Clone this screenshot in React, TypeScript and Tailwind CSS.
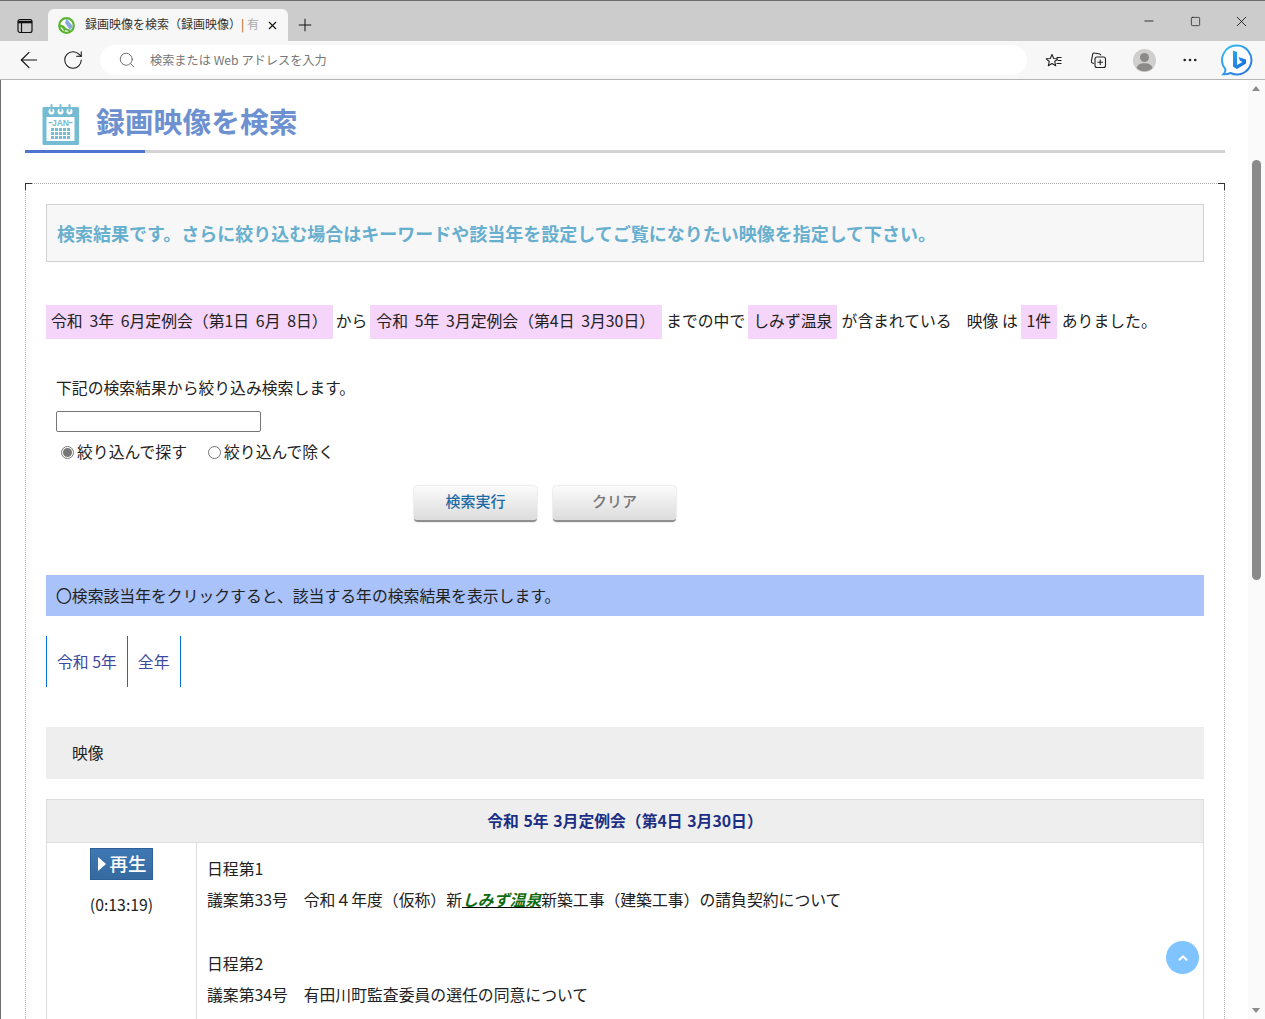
import React from 'react';
import { ArrowLeft, RotateCw, Search, Plus, X, Minus, Square, MoreHorizontal, ChevronUp } from 'lucide-react';

const Hl = ({ children, className = 'px-[5px]' }: { children: React.ReactNode; className?: string }) => (
  <span className={`inline-flex h-[34px] items-center bg-[#f5d5fa] [word-spacing:3.2px] ${className}`}>{children}</span>
);

const CalendarIcon = () => (
  <svg width="38" height="41" viewBox="0 0 38 41" className="shrink-0">
    <rect x="0.5" y="3" width="36.500" height="38" rx="1.500" fill="#74bbd4" />
    <rect x="4.500" y="13" width="28" height="24" fill="#fff" />
    {[9.500, 18.500, 27.500].map(x => (
      <g key={x}>
        <circle cx={x} cy="7.500" r="3" fill="#fff" />
        <rect x={x - 1} y="0" width="2" height="8" rx="1" fill="#74bbd4" />
      </g>
    ))}
    <rect x="6.500" y="18" width="4" height="1.200" fill="#74bbd4" />
    <rect x="26.500" y="18" width="4" height="1.200" fill="#74bbd4" />
    <text x="18.500" y="21.500" textAnchor="middle" fontSize="8.500" fontWeight="700" fill="#74bbd4" fontFamily="Liberation Sans">JAN</text>
    {[24, 28, 32].map(y =>
      [9, 13, 17, 21, 25].map(x => <rect key={`${x}-${y}`} x={x} y={y} width="3" height="3" fill="#74bbd4" />)
    )}
  </svg>
);

const Favicon = () => (
  <svg width="17" height="17" viewBox="0 0 17 17">
    <circle cx="8.500" cy="8.500" r="7.300" fill="#fff" stroke="#5cb531" strokeWidth="2.200" />
    <path d="M8.500 1.500L15 9.500l-3 3.500L7 6z" fill="#8aa9de" />
    <path d="M2 7.500c3 .5 5 1.500 6 4l-2 3.500c0-3-2-5-4.500-5z" fill="#5cb531" />
    <path d="M6.500 10.500l6 2.500-1 1.500-5.500-2z" fill="#5cb531" />
  </svg>
);

const SidebarIcon = () => (
  <svg width="16" height="16" viewBox="0 0 16 16" fill="none" stroke="#111" strokeWidth="1.200">
    <rect x="1" y="1.500" width="14" height="13" rx="2" />
    <path d="M1 4h14" strokeWidth="2.600" />
    <path d="M4.500 4v10.500" />
  </svg>
);

const BingIcon = () => (
  <svg width="32" height="32" viewBox="0 0 32 32">
    <defs>
      <linearGradient id="bingRing" x1="0" y1="0" x2="1" y2="1">
        <stop offset="0" stopColor="#35c1f1" />
        <stop offset="1" stopColor="#2f6fe0" />
      </linearGradient>
      <linearGradient id="bingB" x1="0" y1="0" x2="1" y2="1">
        <stop offset="0" stopColor="#2aa8e8" />
        <stop offset="1" stopColor="#1b63e0" />
      </linearGradient>
    </defs>
    <path d="M16 1.500a14.500 14.500 0 1 1-6.500 27.500c-2 1-4 1.400-7 1.300 1.200-1.200 2-3 2-5A14.500 14.500 0 0 1 16 1.500z" fill="#fff" stroke="url(#bingRing)" strokeWidth="2" />
    <path d="M12 6.500l4 1.400v13l5.500-3-2.500-1.200-1.500-3.800 7.500 2.600v4L16 25l-4-2.200z" fill="url(#bingB)" />
  </svg>
);

const FavoritesIcon = () => (
  <svg width="18" height="18" viewBox="0 0 18 18" fill="none" stroke="#222" strokeWidth="1.100" strokeLinejoin="round">
    <path d="M7 2l1.700 4 4 .3-3 2.700 1 4.300L7 11l-3.700 2.300 1-4.300-3-2.700 4-.3z" transform="translate(0 1.500)" />
    <path d="M11.500 6.500h5M12.500 9.500h4M11.500 12.500h5" />
  </svg>
);

const CollectionsIcon = () => (
  <svg width="18" height="18" viewBox="0 0 18 18" fill="none" stroke="#222" strokeWidth="1.100">
    <path d="M5 12.500L3.400 12a1.500 1.500 0 0 1-1-1.800L3.700 3.200A1.500 1.500 0 0 1 5.500 2l5.200 1a1.500 1.500 0 0 1 1.200 1.400" />
    <rect x="6" y="6" width="10.500" height="10.500" rx="2" fill="#f7f7f7" />
    <path d="M11.200 8.500v5.500M8.500 11.200h5.500" />
  </svg>
);

const ProfileIcon = () => (
  <svg width="23" height="23" viewBox="0 0 23 23">
    <circle cx="11.500" cy="11.500" r="11.500" fill="#d0cfcd" />
    <circle cx="11.500" cy="8.500" r="4.500" fill="#8c8a88" />
    <path d="M3.500 19c1-3.500 4-4.800 8-4.800s7 1.300 8 4.800a11.500 11.500 0 0 1-16 0z" fill="#8c8a88" />
  </svg>
);

export default function App() {
  return (
    <div className="flex h-[1019px] w-[1265px] flex-col overflow-hidden bg-white font-['Noto_Sans_CJK_JP','Noto_Sans',sans-serif] text-[15.84px] text-[#222]">
      {/* Tab strip */}
      <div className="flex h-[41px] shrink-0 items-end border-t border-[#6e6e6e] bg-[#cccccc]">
        <div className="flex h-[31px] w-[48px] items-center justify-center pl-[2px]">
          <SidebarIcon />
        </div>
        <div className="flex h-[32px] w-[240px] items-center rounded-t-[6px] bg-[#f7f7f7] pl-[10px] pr-[9px]">
          <Favicon />
          <span className="ml-[10px] w-[172px] whitespace-nowrap pb-[2px] text-[12px] text-[#333]">
            録画映像を検索（録画映像）<span className="text-[#a06000]">|</span> <span className="text-[#aaa]">有</span>
          </span>
          <X size={13} strokeWidth={2} className="ml-[9px] text-[#111]" />
        </div>
        <div className="flex h-[32px] w-[34px] items-center justify-center">
          <Plus size={20} strokeWidth={1.200} className="text-[#111]" />
        </div>
        <div className="flex-1" />
        <div className="mr-[1px] flex h-[40px] w-[138px] items-center self-start text-[#111]">
          <div className="flex w-[46px] justify-center"><Minus size={14} strokeWidth={1.400} /></div>
          <div className="flex w-[46px] justify-center"><Square size={11} strokeWidth={1.500} /></div>
          <div className="flex w-[46px] justify-center"><X size={17} strokeWidth={1.200} /></div>
        </div>
      </div>

      {/* Toolbar */}
      <div className="flex h-[39px] shrink-0 items-center border-b border-[#b5b5b5] bg-[#f7f7f7] pl-[16px]">
        <ArrowLeft size={26} strokeWidth={1.100} className="text-[#111]" />
        <RotateCw size={22} strokeWidth={1.100} className="ml-[20px] text-[#111]" />
        <div className="ml-[16px] flex h-[30px] w-[927px] items-center rounded-full bg-white pl-[18px]">
          <Search size={18} strokeWidth={1.100} className="text-[#555]" />
          <span className="ml-[14px] text-[12.200px] text-[#777]">検索または Web アドレスを入力</span>
        </div>
        <div className="ml-[18px] flex w-[18px] justify-center"><FavoritesIcon /></div>
        <div className="ml-[26px] flex w-[18px] justify-center"><CollectionsIcon /></div>
        <div className="ml-[26px] flex"><ProfileIcon /></div>
        <div className="ml-[25px] flex"><MoreHorizontal size={18} strokeWidth={1.600} className="text-[#222]" /></div>
        <div className="ml-[22px] flex"><BingIcon /></div>
      </div>

      {/* Page */}
      <div className="relative flex min-h-0 flex-1 border-l border-[#6e6e6e]">
        <main className="min-w-0 flex-1 overflow-hidden pl-[24px] pr-[23px]">
          <div className="relative flex h-[73px] items-end border-b-[3px] border-[#d3d3d3] pb-[5px] pl-[17px]">
            <CalendarIcon />
            <h1 className="ml-[16px] text-[28.800px] font-bold leading-[48px] text-[#6d90d0]">録画映像を検索</h1>
            <div className="absolute bottom-[-3px] left-0 h-[3px] w-[120px] bg-[#4f74d0]" />
          </div>

          <section className="relative mt-[30px] border border-b-0 border-dotted border-[#aaa] px-[20px] pt-[20px]">
            <span className="absolute left-[-1px] top-[-1px] h-[7px] w-[7px] border-l border-t border-[#333]" />
            <span className="absolute right-[-1px] top-[-1px] h-[7px] w-[7px] border-r border-t border-[#333]" />

            <div className="flex h-[58px] items-center border border-[#d0d0d0] bg-[#f7f7f7] pl-[10px] text-[18px] font-bold text-[#67afce]">
              検索結果です。さらに絞り込む場合はキーワードや該当年を設定してご覧になりたい映像を指定して下さい。
            </div>

            <div className="mt-[43px] flex h-[34px] items-center whitespace-pre [&>span]:pb-[2px]">
              <Hl>令和 3年 6月定例会（第1日 6月 8日）</Hl>
              <span className="mx-[3px]">から</span>
              <Hl className="pl-[6px] pr-[7px]">令和 5年 3月定例会（第4日 3月30日）</Hl>
              <span className="ml-[4px] mr-[3px]">までの中で</span>
              <Hl>しみず温泉</Hl>
              <span className="ml-[4px] mr-[15px]">が含まれている</span>
              <span className="mr-[3px]">映像 は</span>
              <Hl className="w-[36px] justify-center">1件</Hl>
              <span className="ml-[5px]">ありました。</span>
            </div>

            <div className="mt-[36px] pl-[10px]">
              <p className="leading-[26px]">下記の検索結果から絞り込み検索します。</p>
              <input type="text" className="mt-[10px] block h-[21px] w-[205px] rounded-[2px] border border-[#767676] bg-white" />
              <div className="mt-[8px] flex h-[24px] items-center pl-[5px]">
                <span className="flex h-[13px] w-[13px] items-center justify-center rounded-full border border-[#767676]">
                  <span className="h-[9px] w-[9px] rounded-full bg-[#767676]" />
                </span>
                <span className="ml-[3px]">絞り込んで探す</span>
                <span className="ml-[21px] h-[13px] w-[13px] rounded-full border border-[#767676]" />
                <span className="ml-[3px]">絞り込んで除く</span>
              </div>
              <div className="mt-[22px] flex pl-[358px]">
                <button className="h-[36px] w-[123px] rounded-[4px] border-b-2 border-[#8f8f8f] bg-gradient-to-b from-[#fbfbfb] to-[#dcdcdc] pb-[3px] text-[15px] font-medium text-[#1d6aa5] shadow-[0_0_1.500px_rgba(0,0,0,0.35)]">検索実行</button>
                <button className="ml-[16px] h-[36px] w-[123px] rounded-[4px] border-b-2 border-[#8f8f8f] bg-gradient-to-b from-[#fbfbfb] to-[#dcdcdc] pb-[3px] text-[15px] font-medium text-[#777] shadow-[0_0_1.500px_rgba(0,0,0,0.35)]">クリア</button>
              </div>
            </div>

            <div className="mt-[53px] flex h-[41px] items-center bg-[#a9c2fa] pl-[10px]">〇検索該当年をクリックすると、該当する年の検索結果を表示します。</div>

            <div className="mt-[20px] flex h-[51px] w-fit border-r border-[#0a6fd8] text-[#3c4a9e]">
              <span className="flex items-center border-l border-[#0a6fd8] px-[10px]">令和 5年</span>
              <span className="flex items-center border-l border-[#0a6fd8] px-[10px]">全年</span>
            </div>

            <div className="mt-[40px] flex h-[52px] items-center bg-[#eeeeee] pl-[26px]">映像</div>

            <div className="mt-[20px] border border-b-0 border-[#dddddd]">
              <div className="flex h-[43px] items-center justify-center border-b border-[#dddddd] bg-[#eeeeee] font-bold text-[#1c2f85] [word-spacing:1px]">
                令和 5年 3月定例会（第4日 3月30日）
              </div>
              <div className="flex h-[300px]">
                <div className="flex w-[150px] shrink-0 flex-col items-center border-r border-[#dddddd] pt-[5px]">
                  <div className="flex h-[32px] w-[63px] items-center justify-center border border-[#2f5f97] bg-gradient-to-b from-[#3f78b5] to-[#356a9f] pl-[2px] text-[18.500px] font-medium text-white">
                    <svg width="8" height="14" viewBox="0 0 8 14" className="mr-[3px]"><path d="M0 0l8 7-8 7z" fill="#fff" /></svg>
                    再生
                  </div>
                  <p className="mt-[12px] leading-[26px]">(0:13:19)</p>
                </div>
                <div className="flex-1 pl-[10px] pt-[10px] leading-[31px]">
                  <p>日程第1</p>
                  <p>
                    議案第33号　令和４年度（仮称）新
                    <b className="italic text-[#0f6b0f] underline decoration-black">しみず温泉</b>
                    新築工事（建築工事）の請負契約について
                  </p>
                  <p className="mt-[33px]">日程第2</p>
                  <p>議案第34号　有田川町監査委員の選任の同意について</p>
                </div>
              </div>
            </div>
          </section>
        </main>

        {/* Scrollbar */}
        <div className="flex w-[17px] shrink-0 flex-col items-center bg-[#fafafa] pr-[1px]">
          <div className="mt-[6px] h-0 w-0 border-x-[4px] border-b-[5px] border-x-transparent border-b-[#8a8a8a]" />
          <div className="mt-[69px] h-[420px] w-[9px] rounded-full bg-[#8a8a8a]" />
          <div className="mb-[6px] mt-auto h-0 w-0 border-x-[4px] border-t-[5px] border-x-transparent border-t-[#8a8a8a]" />
        </div>

        <div className="absolute left-[1165px] top-[861px] flex h-[33px] w-[33px] items-center justify-center rounded-full bg-[#7fc4ff]">
          <ChevronUp size={14} strokeWidth={3.500} className="text-white" />
        </div>
      </div>
    </div>
  );
}
